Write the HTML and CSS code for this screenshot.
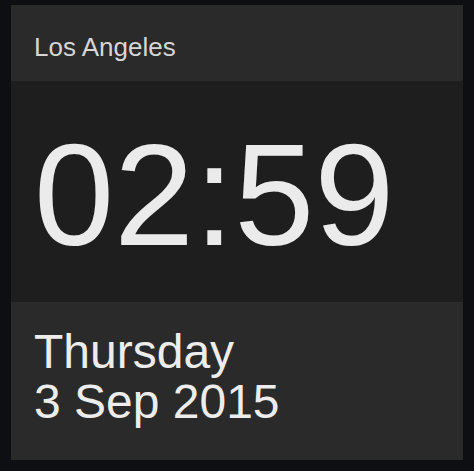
FILE: index.html
```html
<!DOCTYPE html>
<html>
<head>
<meta charset="utf-8">
<link rel="stylesheet" href="styles.css">
</head>
<body>
<div class="clock">
  <div class="city">Los Angeles</div>
  <div class="time">02:59</div>
  <div class="date">
    <div class="day">Thursday</div>
    <div class="full">3 Sep 2015</div>
  </div>
</div>
</body>
</html>
```
FILE: styles.css
```css
html, body {
  margin: 0;
  padding: 0;
  background: #0e0f13;
}
body {
  width: 474px;
  height: 471px;
  box-sizing: border-box;
  padding: 5px 11px 11px 11px;
  font-family: "Liberation Sans", Arial, sans-serif;
}
.clock {
  width: 452px;
  height: 455px;
  display: flex;
  flex-direction: column;
}
.city {
  height: 76px;
  box-sizing: border-box;
  padding: 27px 0 0 23px;
  background: #2a2a2a;
  color: #d6d6d6;
  font-size: 26px;
  line-height: 30px;
}
.time {
  height: 221px;
  box-sizing: border-box;
  padding: 43px 0 0 23px;
  background: #1e1e1e;
  color: #ebebeb;
  font-size: 144px;
  line-height: 144px;
}
.date {
  flex: 1;
  box-sizing: border-box;
  padding: 25px 0 0 23px;
  background: #2a2a2a;
  color: #ededed;
  font-size: 48px;
  line-height: 50px;
}
```
